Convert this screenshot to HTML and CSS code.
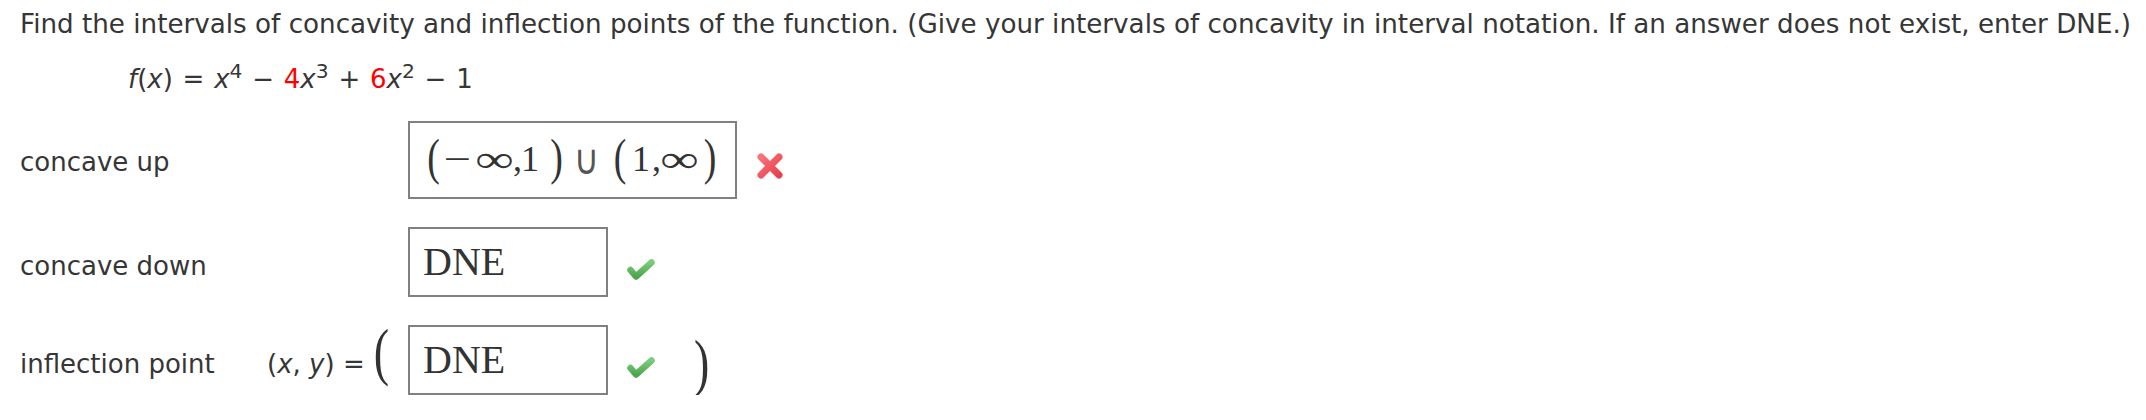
FILE: index.html
```html
<!DOCTYPE html>
<html lang="en">
<head>
<meta charset="utf-8">
<title>Concavity</title>
<link rel="stylesheet" href="styles.css">
</head>
<body>
<main class="question">
  <p class="prompt">Find the intervals of concavity and inflection points of the function. (Give your intervals of concavity in interval notation. If an answer does not exist, enter DNE.)</p>
  <p class="formula"><i>f</i>(<i>x</i>) = <i>x</i><sup>4</sup> − <span class="red">4</span><i>x</i><sup>3</sup> + <span class="red">6</span><i>x</i><sup>2</sup> − 1</p>

  <div class="answers">
    <div class="label">concave up</div>
    <div class="prefix"></div>
    <div class="cell">
      <div class="field wide">
        <span class="math">
          <span class="g p1 paren">(</span><span class="g p2 minus">−</span><span class="g p3 inf">∞</span><span class="g p4">,</span><span class="g p5">1</span><span class="g p6 paren">)</span><span class="g p7 cup">∪</span><span class="g p8 paren">(</span><span class="g p9">1</span><span class="g p10">,</span><span class="g p11 inf">∞</span><span class="g p12 paren">)</span>
        </span>
      </div>
      <svg class="icon cross" width="28" height="28" viewBox="0 0 28 28" aria-label="incorrect">
        <defs>
          <linearGradient id="rg" x1="0" y1="0" x2="1" y2="1">
            <stop offset="0" stop-color="#f7737b"/>
            <stop offset="1" stop-color="#e8414c"/>
          </linearGradient>
        </defs>
        <path d="M5 5 L23 23 M23 5 L5 23" stroke="url(#rg)" stroke-width="7" stroke-linecap="round" fill="none"/>
      </svg>
    </div>

    <div class="label">concave down</div>
    <div class="prefix"></div>
    <div class="cell">
      <div class="field"><span class="dne">DNE</span></div>
      <svg class="icon check" width="30" height="25" viewBox="0 0 30 25" aria-label="correct">
        <defs>
          <linearGradient id="gg" x1="0" y1="0" x2="0" y2="1">
            <stop offset="0" stop-color="#7ccb7a"/>
            <stop offset="1" stop-color="#4ea64f"/>
          </linearGradient>
        </defs>
        <path d="M4.5 13 L10 19.5 L25.5 5.5" stroke="url(#gg)" stroke-width="6.5" stroke-linecap="round" stroke-linejoin="round" fill="none"/>
      </svg>
    </div>

    <div class="label">inflection point</div>
    <div class="prefix"><span class="xy">(<i>x</i>, <i>y</i>) =</span><span class="bigparen">(</span></div>
    <div class="cell">
      <div class="field"><span class="dne">DNE</span></div>
      <svg class="icon check" width="30" height="25" viewBox="0 0 30 25" aria-label="correct">
        <defs>
          <linearGradient id="gg2" x1="0" y1="0" x2="0" y2="1">
            <stop offset="0" stop-color="#7ccb7a"/>
            <stop offset="1" stop-color="#4ea64f"/>
          </linearGradient>
        </defs>
        <path d="M4.5 13 L10 19.5 L25.5 5.5" stroke="url(#gg2)" stroke-width="6.5" stroke-linecap="round" stroke-linejoin="round" fill="none"/>
      </svg>
      <span class="bigparen close">)</span>
    </div>
  </div>
</main>
</body>
</html>
```

FILE: styles.css
```css
html, body {
  margin: 0;
  padding: 0;
  background: #ffffff;
}

.question {
  padding: 9px 20px 0 20px;
  font-family: "DejaVu Sans", "Liberation Sans", sans-serif;
  color: #363636;
}

.prompt {
  margin: 0;
  font-size: 26.2px;
  line-height: 30px;
  white-space: nowrap;
}

.formula {
  margin: 25px 0 0 108px;
  font-size: 26px;
  line-height: 30px;
  word-spacing: 1.5px;
}

.formula sup {
  font-size: 0.78em;
  line-height: 0;
  vertical-align: 0.5em;
}

.red {
  color: #ff0000;
}

.answers {
  margin-top: 27px;
  display: grid;
  grid-template-columns: 247px 141px auto;
  row-gap: 28px;
  align-items: baseline;
  font-size: 26px;
}

.label {
  padding-top: 2px;
}

.prefix {
  display: flex;
  align-items: baseline;
}

.xy {
  white-space: nowrap;
}

.bigparen {
  display: inline-block;
  font-family: "Liberation Serif", serif;
  font-size: 46px;
  line-height: 1;
  color: #333;
  transform: translateY(-6px) scale(1, 1.4);
  margin-left: 9px;
}

.bigparen.close {
  margin-left: 38px;
  align-self: center;
  transform: translateY(3px) scale(1, 1.4);
}

.cell {
  display: flex;
  align-items: baseline;
}

.field {
  box-sizing: border-box;
  height: 70px;
  min-width: 200px;
  border: 2px solid #808080;
  padding: 0 13px;
  display: flex;
  align-items: center;
  font-family: "Liberation Serif", serif;
  color: #333;
}

.field.wide {
  height: 78px;
  padding: 0 18px 0 10px;
}

.dne {
  font-size: 40px;
  line-height: 44px;
}

.math {
  display: flex;
  align-items: baseline;
  font-size: 36px;
  line-height: 40px;
}

.g {
  display: inline-block;
  text-align: center;
}

.paren {
  transform: translateY(-2px) scale(1.05, 1.4);
}

.minus {
  transform: scaleX(1.35);
}

.inf {
  transform: scale(1.5, 1.05);
}

.cup {
  font-family: "DejaVu Sans", sans-serif;
  font-size: 30px;
  color: #555555;
  transform: translateY(-1px) scale(1.15, 1.4);
}

.p1 { margin-left: 7px; width: 13px; }
.p2 { margin-left: 7px; width: 20px; }
.p3 { margin-left: 10px; width: 35px; }
.p4 { margin-left: 1px; width: 5px; }
.p5 { margin-left: 2px; width: 20px; }
.p6 { margin-left: 10px; width: 13px; }
.p7 { margin-left: 12px; width: 18px; }
.p8 { margin-left: 20px; width: 14px; }
.p9 { margin-left: 5px; width: 18px; }
.p10 { margin-left: 2px; width: 5px; }
.p11 { margin-left: 5px; width: 35px; }
.p12 { margin-left: 6px; width: 14px; }

.icon {
  align-self: center;
  flex: none;
}

.icon.cross {
  margin-left: 19px;
  margin-top: 12px;
}

.icon.check {
  margin-left: 18px;
  margin-top: 14px;
}
```
